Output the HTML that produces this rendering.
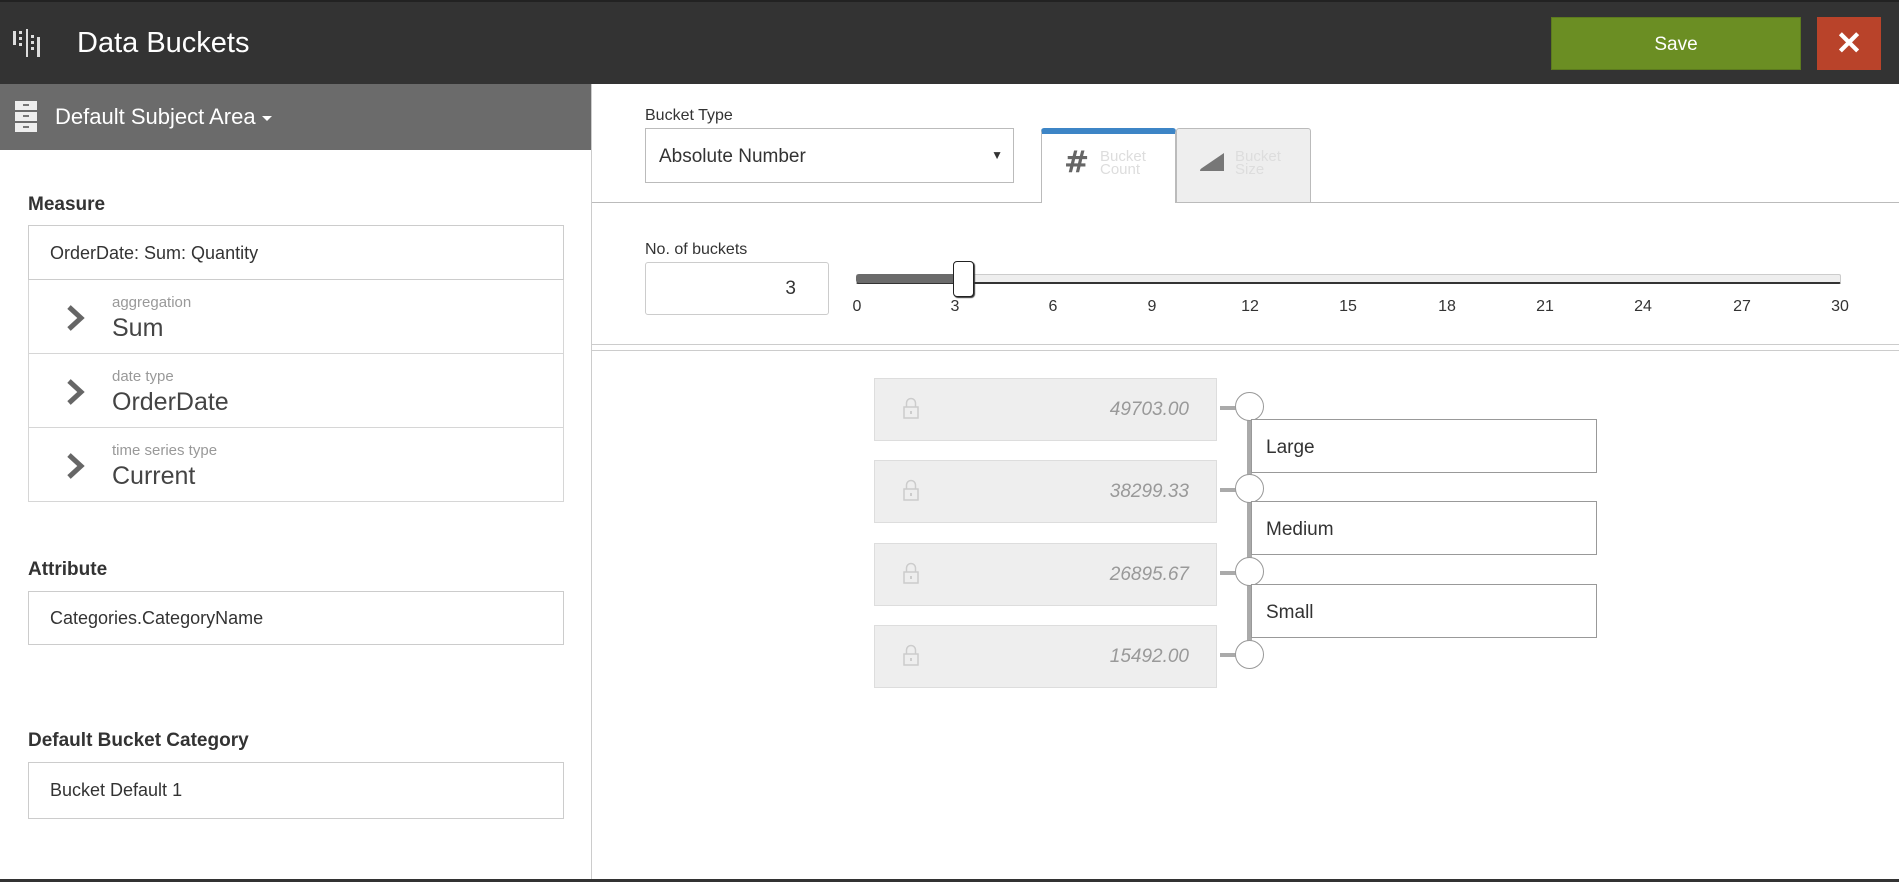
<!DOCTYPE html>
<html><head><meta charset="utf-8"><style>
*{box-sizing:border-box;margin:0;padding:0}
body{width:1899px;height:882px;position:relative;overflow:hidden;background:#fff;font-family:"Liberation Sans",Arial,sans-serif;color:#333}
.a{position:absolute}
.hdr{left:0;top:0;width:1899px;height:84px;background:#333;border-top:2px solid #222}
.box{position:absolute;border:1px solid #ccc;background:#fff}
.lbl{position:absolute;font-weight:bold;font-size:19px;color:#333}
.row{position:absolute;left:28px;width:536px;border:1px solid #d6d6d6;border-top:none;background:#fff}
.row .s{position:absolute;left:83px;top:14px;font-size:15px;color:#999}
.row .v{position:absolute;left:83px;top:34px;font-size:25px;color:#444}
.row svg{position:absolute;left:36px;top:24px}
.val{position:absolute;left:874px;width:343px;height:63px;background:#eee;border:1px solid #ddd}
.val span{position:absolute;right:27px;top:20px;font-size:19px;font-style:italic;color:#999}
.val svg{position:absolute;left:28px;top:18px}
.circ{position:absolute;left:1235px;width:29px;height:29px;border-radius:50%;border:1.5px solid #999;background:#fff}
.stub{position:absolute;left:1220px;width:16px;height:4px;background:#aaa}
.nm{position:absolute;left:1251px;width:346px;height:54px;border:1.5px solid #999;background:#fff;font-size:19px;padding:17px 0 0 14px;color:#333}
.tick{position:absolute;top:298px;font-size:16px;color:#333;transform:translateX(-50%)}
</style></head><body>
<div class="a hdr"></div>
<svg class="a" style="left:13px;top:29px" width="30" height="30" viewBox="0 0 30 30" fill="#ddd">
<rect x="0" y="2" width="3" height="14"/><rect x="6" y="2" width="3" height="3"/><rect x="6" y="8" width="3" height="3"/><rect x="6" y="14" width="3" height="3"/>
<rect x="13" y="0" width="2" height="28"/><rect x="18" y="6" width="3" height="3"/><rect x="18" y="12" width="3" height="3"/><rect x="18" y="18" width="3" height="3"/><rect x="24" y="8" width="3" height="20"/></svg>
<div class="a" style="left:77px;top:27px;font-size:29px;color:#fff">Data Buckets</div>
<div class="a" style="left:1551px;top:17px;width:250px;height:53px;background:#6b8e23;color:#fff;font-size:19px;text-align:center;line-height:53px;border:1px solid #5c7a1e">Save</div>
<div class="a" style="left:1817px;top:17px;width:64px;height:53px;background:#b9432a;color:#fff;font-size:32px;font-weight:bold;text-align:center;line-height:53px">✕</div>
<div class="a" style="left:0;top:84px;width:591px;height:66px;background:#6b6b6b"></div>
<svg class="a" style="left:15px;top:101px" width="22" height="32" viewBox="0 0 22 32"><rect x="0" y="0" width="22" height="9" fill="#eee"/><rect x="0" y="11" width="22" height="9" fill="#eee"/><rect x="0" y="22" width="22" height="9" fill="#eee"/><rect x="8" y="3" width="6" height="2" fill="#777"/><rect x="8" y="14" width="6" height="2" fill="#777"/><rect x="8" y="25" width="6" height="2" fill="#777"/></svg>
<div class="a" style="left:55px;top:104px;font-size:22px;color:#fff">Default Subject Area <span style="display:inline-block;border-left:5px solid transparent;border-right:5px solid transparent;border-top:5px solid #fff;vertical-align:middle"></span></div>
<div class="a" style="left:591px;top:84px;width:1px;height:798px;background:#ccc"></div>
<div class="lbl" style="left:28px;top:194px">Measure</div>
<div class="box" style="left:28px;top:225px;width:536px;height:55px;font-size:18px;padding:17px 0 0 21px">OrderDate: Sum: Quantity</div>
<div class="row" style="top:280px;height:74px"><svg width="22" height="28" viewBox="0 0 22 28"><path d="M4 3 L16 14 L4 25" fill="none" stroke="#666" stroke-width="5"/></svg><div class="s">aggregation</div><div class="v">Sum</div></div>
<div class="row" style="top:354px;height:74px"><svg width="22" height="28" viewBox="0 0 22 28"><path d="M4 3 L16 14 L4 25" fill="none" stroke="#666" stroke-width="5"/></svg><div class="s">date type</div><div class="v">OrderDate</div></div>
<div class="row" style="top:428px;height:74px"><svg width="22" height="28" viewBox="0 0 22 28"><path d="M4 3 L16 14 L4 25" fill="none" stroke="#666" stroke-width="5"/></svg><div class="s">time series type</div><div class="v">Current</div></div>
<div class="lbl" style="left:28px;top:559px">Attribute</div>
<div class="box" style="left:28px;top:591px;width:536px;height:54px;font-size:18px;padding:16px 0 0 21px">Categories.CategoryName</div>
<div class="lbl" style="left:28px;top:730px">Default Bucket Category</div>
<div class="box" style="left:28px;top:762px;width:536px;height:57px;font-size:18px;padding:17px 0 0 21px">Bucket Default 1</div>
<div class="a" style="left:0;top:879px;width:1899px;height:3px;background:#333"></div>

<div class="a" style="left:645px;top:107px;font-size:16px">Bucket Type</div>
<div class="box" style="left:645px;top:128px;width:369px;height:55px;border-color:#bbb;font-size:19px;padding:17px 0 0 13px">Absolute Number<span style="position:absolute;right:10px;top:19px;font-size:12px">▼</span></div>
<div class="a" style="left:592px;top:202px;width:1307px;height:1px;background:#bbb"></div>
<div class="a" style="left:1041px;top:128px;width:135px;height:75px;background:#fff;border:1px solid #bbb;border-bottom:none;border-top:6px solid #3d85c6;border-radius:3px 3px 0 0"></div>
<div class="a" style="left:1064px;top:145px;font-size:30px;font-weight:bold;color:#666;font-family:'DejaVu Sans',sans-serif">#</div>
<div class="a" style="left:1100px;top:150px;font-size:15px;line-height:13px;color:#ddd">Bucket<br>Count</div>
<div class="a" style="left:1176px;top:128px;width:135px;height:75px;background:#eee;border:1px solid #bbb;border-radius:3px 3px 0 0"></div>
<svg class="a" style="left:1199px;top:152px" width="27" height="20"><path d="M25 1 L25 19 L1 19 Q1 17 3 16 Z" fill="#777"/></svg>
<div class="a" style="left:1235px;top:150px;font-size:15px;line-height:13px;color:#ddd">Bucket<br>Size</div>

<div class="a" style="left:645px;top:241px;font-size:16px">No. of buckets</div>
<div class="box" style="left:645px;top:262px;width:184px;height:53px;border-radius:3px;font-size:19px;text-align:right;padding:15px 32px 0 0">3</div>
<div class="a" style="left:856px;top:274px;width:985px;height:10px;background:#eee;border:1px solid #ccc;border-bottom:2px solid #333;border-radius:2px"></div>
<div class="a" style="left:856px;top:274px;width:106px;height:9px;background:#6b6b6b;border-radius:3px 0 0 3px"></div>
<div class="a" style="left:953px;top:261px;width:21px;height:36px;background:#fff;border:1.5px solid #222;border-radius:4px;box-shadow:1px 1px 1px #333"></div>
<div class="tick" style="left:857px">0</div><div class="tick" style="left:955px">3</div><div class="tick" style="left:1053px">6</div><div class="tick" style="left:1152px">9</div><div class="tick" style="left:1250px">12</div><div class="tick" style="left:1348px">15</div><div class="tick" style="left:1447px">18</div><div class="tick" style="left:1545px">21</div><div class="tick" style="left:1643px">24</div><div class="tick" style="left:1742px">27</div><div class="tick" style="left:1840px">30</div>
<div class="a" style="left:592px;top:344px;width:1307px;height:1px;background:#ccc"></div>
<div class="a" style="left:592px;top:350px;width:1307px;height:1px;background:#ccc"></div>

<div class="a" style="left:1247px;top:410px;width:5px;height:245px;background:#aaa"></div>
<div class="val" style="top:378px"><span>49703.00</span><svg width="16" height="22" viewBox="0 0 16 22"><path d="M3.5 10 V6 a4.5 4.5 0 0 1 9 0 V10" fill="none" stroke="#ccc" stroke-width="1.5"/><rect x="1" y="10" width="14" height="11" fill="none" stroke="#ccc" stroke-width="1.5"/><rect x="7" y="14" width="2" height="3" fill="#ccc"/></svg></div>
<div class="val" style="top:460px"><span>38299.33</span><svg width="16" height="22" viewBox="0 0 16 22"><path d="M3.5 10 V6 a4.5 4.5 0 0 1 9 0 V10" fill="none" stroke="#ccc" stroke-width="1.5"/><rect x="1" y="10" width="14" height="11" fill="none" stroke="#ccc" stroke-width="1.5"/><rect x="7" y="14" width="2" height="3" fill="#ccc"/></svg></div>
<div class="val" style="top:543px"><span>26895.67</span><svg width="16" height="22" viewBox="0 0 16 22"><path d="M3.5 10 V6 a4.5 4.5 0 0 1 9 0 V10" fill="none" stroke="#ccc" stroke-width="1.5"/><rect x="1" y="10" width="14" height="11" fill="none" stroke="#ccc" stroke-width="1.5"/><rect x="7" y="14" width="2" height="3" fill="#ccc"/></svg></div>
<div class="val" style="top:625px"><span>15492.00</span><svg width="16" height="22" viewBox="0 0 16 22"><path d="M3.5 10 V6 a4.5 4.5 0 0 1 9 0 V10" fill="none" stroke="#ccc" stroke-width="1.5"/><rect x="1" y="10" width="14" height="11" fill="none" stroke="#ccc" stroke-width="1.5"/><rect x="7" y="14" width="2" height="3" fill="#ccc"/></svg></div>
<div class="stub" style="top:406px"></div><div class="stub" style="top:488px"></div><div class="stub" style="top:571px"></div><div class="stub" style="top:653px"></div>
<div class="circ" style="top:392px"></div><div class="circ" style="top:474px"></div><div class="circ" style="top:557px"></div><div class="circ" style="top:640px"></div>
<div class="nm" style="top:419px">Large</div>
<div class="nm" style="top:501px">Medium</div>
<div class="nm" style="top:584px">Small</div>
</body></html>
